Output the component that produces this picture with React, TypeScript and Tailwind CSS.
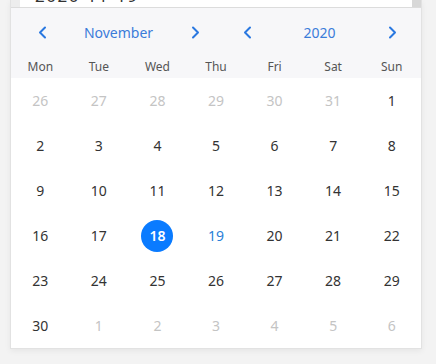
import React from "react";

const Chevron = ({ dir }: { dir: "left" | "right" }) => (
  <svg width="9" height="13" viewBox="0 0 9 13" fill="none">
    <path
      d={dir === "left" ? "M7 1.5 L2 6.5 L7 11.5" : "M2 1.5 L7 6.5 L2 11.5"}
      stroke="#2a78e0"
      strokeWidth="2"
      strokeLinecap="round"
      strokeLinejoin="round"
    />
  </svg>
);

type Day = { n: number; muted?: boolean; selected?: boolean; today?: boolean };

const weeks: Day[][] = [
  [26, 27, 28, 29, 30, 31].map((n) => ({ n, muted: true })).concat([{ n: 1 }]),
  [2, 3, 4, 5, 6, 7, 8].map((n) => ({ n })),
  [9, 10, 11, 12, 13, 14, 15].map((n) => ({ n })),
  [
    { n: 16 },
    { n: 17 },
    { n: 18, selected: true },
    { n: 19, today: true },
    { n: 20 },
    { n: 21 },
    { n: 22 },
  ],
  [23, 24, 25, 26, 27, 28, 29].map((n) => ({ n })),
  [{ n: 30 }].concat([1, 2, 3, 4, 5, 6].map((n) => ({ n, muted: true }))),
];

const weekdays = ["Mon", "Tue", "Wed", "Thu", "Fri", "Sat", "Sun"];

export default function App() {
  return (
    <div
      className="w-[436px] h-[364px] bg-[#f3f3f3] overflow-hidden"
      style={{ fontFamily: '"Noto Sans", "Open Sans", sans-serif' }}
    >
      <div className="ml-[10px] w-[412px] bg-white border border-t-0 border-[#e2e2e2] shadow-[0_2px_6px_rgba(0,0,0,0.06)]">
        {/* cut-off input */}
        <div className="flex h-[8px] border-b border-[#dcdcdc]">
          <div className="w-[9px] bg-[#ededed]" />
          <div className="flex-1 bg-white overflow-hidden relative">
            <div className="absolute left-[15px] bottom-[3px] text-[17px] leading-none tracking-[1.5px] text-[#333]">
              2020-11-19
            </div>
          </div>
          <div className="w-[9px] bg-[#d8d8d8]" />
        </div>
        {/* header */}
        <div className="bg-[#f7f7f9]">
          <div className="flex items-center h-[48px] text-[14px] text-[#3b7cd9]">
            <div className="ml-[19px] w-[24px] flex justify-center">
              <Chevron dir="left" />
            </div>
            <div className="w-[129px] text-center">November</div>
            <div className="w-[24px] flex justify-center">
              <Chevron dir="right" />
            </div>
            <div className="ml-[28px] w-[24px] flex justify-center">
              <Chevron dir="left" />
            </div>
            <div className="w-[121px] text-center">2020</div>
            <div className="w-[24px] flex justify-center">
              <Chevron dir="right" />
            </div>
          </div>
          <div className="grid grid-cols-7 h-[22px] items-center text-[12px] text-[#555]">
            {weekdays.map((w) => (
              <div key={w} className="text-center leading-none">
                {w}
              </div>
            ))}
          </div>
        </div>
        {/* days */}
        <div className="grid grid-cols-7">
          {weeks.flat().map((d, i) => (
            <div key={i} className="h-[45px] flex items-center justify-center text-[14px]">
              {d.selected ? (
                <div className="w-[32px] h-[32px] rounded-full bg-[#0a7bff] text-white flex items-center justify-center font-semibold">
                  {d.n}
                </div>
              ) : (
                <span
                  className={
                    d.muted
                      ? "text-[#c4c4c4]"
                      : d.today
                      ? "text-[#2a7fd8]"
                      : "text-[#333]"
                  }
                >
                  {d.n}
                </span>
              )}
            </div>
          ))}
        </div>
      </div>
    </div>
  );
}
